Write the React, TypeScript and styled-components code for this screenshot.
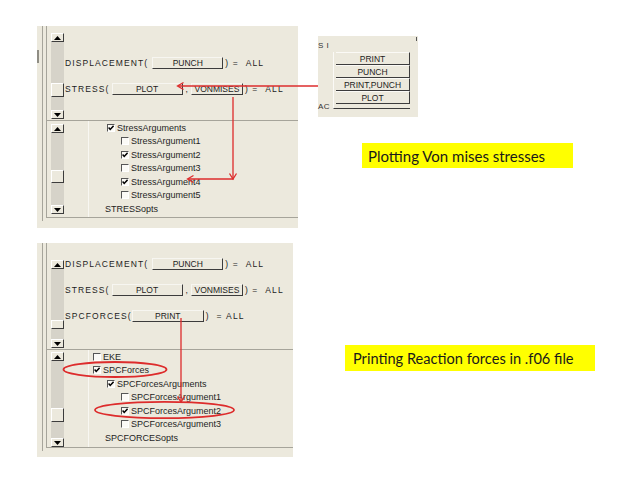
import React from 'react';
import styled, { createGlobalStyle } from 'styled-components';

const BEIGE = '#ece9dd';
const DARK = '#3c3c3c';
const LINE = '#a6a49a';
const RED = '#dd2c2c';

const GlobalStyle = createGlobalStyle`
  html, body { margin: 0; padding: 0; background: #fff; }
  body { font-family: 'Liberation Sans', Arial, sans-serif; color: #1c1c1c; }
  * { box-sizing: border-box; }
`;

type TreeNode = { label: string; indent: number; box?: boolean; checked?: boolean };

const stressTree: TreeNode[] = [
  { label: 'StressArguments', indent: 18, box: true, checked: true },
  { label: 'StressArgument1', indent: 32, box: true },
  { label: 'StressArgument2', indent: 32, box: true, checked: true },
  { label: 'StressArgument3', indent: 32, box: true },
  { label: 'StressArgument4', indent: 32, box: true, checked: true },
  { label: 'StressArgument5', indent: 32, box: true },
  { label: 'STRESSopts', indent: 16 },
];

const spcTree: TreeNode[] = [
  { label: 'EKE', indent: 4, box: true },
  { label: 'SPCForces', indent: 4, box: true, checked: true },
  { label: 'SPCForcesArguments', indent: 18, box: true, checked: true },
  { label: 'SPCForcesArgument1', indent: 32, box: true },
  { label: 'SPCForcesArgument2', indent: 32, box: true, checked: true },
  { label: 'SPCForcesArgument3', indent: 32, box: true },
  { label: 'SPCFORCESopts', indent: 16 },
];

const popupItems = ['PRINT', 'PUNCH', 'PRINT,PUNCH', 'PLOT'];

export default function App() {
  return (
    <Page>
      <GlobalStyle />
      <Stack>
        <Row>
          <Panel $w={261} $h={202} $padBottom={7}>
            <LeftStrip>
              <Mark />
            </LeftStrip>
            <Frame>
              <Inner>
                <Section $h={95} $line>
                  <ScrollBar padTop={7} padBottom={1} thumbAt={41} thumbSize={14} />
                  <FormArea $padTop={24}>
                    <FormRow>
                      <Label>DISPLACEMENT(</Label>
                      <Field $w={71} $gap={4}>PUNCH</Field>
                      <Tail>{')\u00a0=\u00a0\u00a0ALL'}</Tail>
                    </FormRow>
                    <FormRow>
                      <Label>STRESS(</Label>
                      <Field $w={71} $gap={2}>PLOT</Field>
                      <Comma>,</Comma>
                      <Field $w={52} $gap={0}>VONMISES</Field>
                      <Tail>{')\u00a0=\u00a0\u00a0ALL'}</Tail>
                    </FormRow>
                  </FormArea>
                </Section>
                <Section $h={96}>
                  <ScrollBar padTop={3} padBottom={3} thumbAt={37} thumbSize={13} />
                  <Tree nodes={stressTree} />
                </Section>
              </Inner>
            </Frame>
          </Panel>
          <Side>
            <Popup>
              <FragCol>
                <Frag>S I</Frag>
                <Frag>AC</Frag>
              </FragCol>
              <ListFrame>
                {popupItems.map((p) => (
                  <PopupItem key={p}>{p}</PopupItem>
                ))}
              </ListFrame>
              <RightCol>
                <Tick />
              </RightCol>
            </Popup>
            <Caption $w={211} $h={25} $pl={6} $top={26} $left={64}>
              Plotting Von mises stresses
            </Caption>
          </Side>
        </Row>
        <Row>
          <Panel $w={256} $h={214} $padBottom={6}>
            <LeftStrip />
            <Frame>
              <Inner>
                <Section $h={107} $line>
                  <ScrollBar padTop={17} padBottom={1} thumbAt={51} thumbSize={9} />
                  <FormArea $padTop={8}>
                    <FormRow>
                      <Label>DISPLACEMENT(</Label>
                      <Field $w={71} $gap={4}>PUNCH</Field>
                      <Tail>{')\u00a0=\u00a0\u00a0ALL'}</Tail>
                    </FormRow>
                    <FormRow>
                      <Label>STRESS(</Label>
                      <Field $w={71} $gap={2}>PLOT</Field>
                      <Comma>,</Comma>
                      <Field $w={52} $gap={0}>VONMISES</Field>
                      <Tail>{')\u00a0=\u00a0\u00a0ALL'}</Tail>
                    </FormRow>
                    <FormRow>
                      <Label>SPCFORCES(</Label>
                      <Field $w={72} $gap={0}>PRINT</Field>
                      <Tail>{')\u00a0\u00a0=\u00a0ALL'}</Tail>
                    </FormRow>
                  </FormArea>
                </Section>
                <Section $h={97}>
                  <ScrollBar padTop={2} padBottom={0} thumbAt={47} thumbSize={14} />
                  <Tree nodes={spcTree} />
                </Section>
              </Inner>
            </Frame>
          </Panel>
          <Side>
            <Caption $w={250} $h={26} $pl={8} $top={102} $left={52} $size={14.6}>
              Printing Reaction forces in .f06 file
            </Caption>
          </Side>
        </Row>
      </Stack>

      <Overlay viewBox="0 0 638 478" width={638} height={478}>
        <g stroke={RED} strokeWidth={1.3} fill="none">
          <path d="M318 86 H178" />
          <path d="M183.5 82.5 L177.5 86 L183.5 89.5" />
          <path d="M233 97 V179 H188" />
          <path d="M229.5 173.5 L233 179 L236.5 173.5" />
          <path d="M193.5 175.5 L187.5 179 L193.5 182.5" />
          <path d="M181 318 V402" />
          <path d="M177.5 396.5 L181 402 L184.5 396.5" />
        </g>
        <g stroke={RED} strokeWidth={1.8} fill="none">
          <ellipse cx={115} cy={369.5} rx={51.5} ry={7.5} />
          <ellipse cx={164.5} cy={410} rx={69.5} ry={8.2} />
        </g>
      </Overlay>
    </Page>
  );
}

function ScrollBar({
  padTop,
  padBottom,
  thumbAt,
  thumbSize,
}: {
  padTop: number;
  padBottom: number;
  thumbAt: number;
  thumbSize: number;
}) {
  return (
    <ScrollCol $padTop={padTop} $padBottom={padBottom}>
      <ArrowButton>
        <svg width="7" height="4" viewBox="0 0 7 4">
          <path d="M0 4 L3.5 0 L7 4 Z" fill="#000" />
        </svg>
      </ArrowButton>
      <Track>
        <Thumb $at={thumbAt} $size={thumbSize} />
      </Track>
      <ArrowButton>
        <svg width="7" height="4" viewBox="0 0 7 4">
          <path d="M0 0 L3.5 4 L7 0 Z" fill="#000" />
        </svg>
      </ArrowButton>
    </ScrollCol>
  );
}

function Tree({ nodes }: { nodes: TreeNode[] }) {
  return (
    <TreeArea>
      <Gutter />
      <TreeItems>
        {nodes.map((n) => (
          <TreeItem key={n.label} $indent={n.indent}>
            {n.box && (
              <CheckBox>
                {n.checked && (
                  <svg width="6" height="6" viewBox="0 0 6 6">
                    <path d="M0.6 2.6 L2.2 4.4 L5.6 0.8" stroke="#000" strokeWidth="1.5" fill="none" />
                  </svg>
                )}
              </CheckBox>
            )}
            {n.label}
          </TreeItem>
        ))}
      </TreeItems>
    </TreeArea>
  );
}

const Page = styled.div`
  position: relative;
  width: 638px;
  height: 478px;
  overflow: hidden;
  background: #fff;
`;

const Stack = styled.div`
  display: flex;
  flex-direction: column;
  gap: 15px;
  padding: 26px 0 0 37px;
`;

const Row = styled.div`
  display: flex;
  align-items: flex-start;
`;

const Panel = styled.div<{ $w: number; $h: number; $padBottom: number }>`
  display: flex;
  align-items: flex-start;
  width: ${(p) => p.$w}px;
  height: ${(p) => p.$h}px;
  padding-bottom: ${(p) => p.$padBottom}px;
  background: ${BEIGE};
`;

const LeftStrip = styled.div`
  width: 5px;
  align-self: stretch;
  padding-top: 24px;
`;

const Mark = styled.div`
  width: 2px;
  height: 13px;
  background: #8f8d84;
`;

const Frame = styled.div`
  flex: 1;
  border-left: 1px solid ${LINE};
  padding: 0 0 3px 3px;
`;

const Inner = styled.div`
  display: flex;
  flex-direction: column;
  border-left: 1px solid ${LINE};
  border-bottom: 1px solid ${LINE};
`;

const Section = styled.div<{ $h: number; $line?: boolean }>`
  display: flex;
  height: ${(p) => p.$h}px;
  padding-left: 4px;
  border-bottom: ${(p) => (p.$line ? `1px solid ${LINE}` : 'none')};
`;

const ScrollCol = styled.div<{ $padTop: number; $padBottom: number }>`
  display: flex;
  flex-direction: column;
  width: 13px;
  flex-shrink: 0;
  padding: ${(p) => p.$padTop}px 0 ${(p) => p.$padBottom}px;
`;

const ArrowButton = styled.div`
  display: flex;
  align-items: center;
  justify-content: center;
  height: 9px;
  background: ${BEIGE};
  border-top: 1px solid #fff;
  border-left: 1px solid #fff;
  border-right: 1px solid ${DARK};
  border-bottom: 1px solid ${DARK};
`;

const Track = styled.div`
  flex: 1;
  background: #d6d3c9;
`;

const Thumb = styled.div<{ $at: number; $size: number }>`
  margin-top: ${(p) => p.$at}px;
  height: ${(p) => p.$size}px;
  background: ${BEIGE};
  border-top: 1px solid #fff;
  border-left: 1px solid #fff;
  border-right: 1px solid ${DARK};
  border-bottom: 1px solid ${DARK};
`;

const FormArea = styled.div<{ $padTop: number }>`
  display: flex;
  flex-direction: column;
  padding-top: ${(p) => p.$padTop}px;
  padding-left: 1px;
`;

const FormRow = styled.div`
  display: flex;
  align-items: center;
  height: 26px;
  font-size: 8.5px;
  white-space: nowrap;
`;

const Label = styled.span`
  letter-spacing: 1.1px;
`;

const Field = styled.span<{ $w: number; $gap: number }>`
  display: inline-flex;
  align-items: center;
  justify-content: center;
  width: ${(p) => p.$w}px;
  height: 12px;
  margin-left: ${(p) => p.$gap}px;
  border-top: 1px solid #f7f6f1;
  border-left: 1px solid #f7f6f1;
  border-right: 1px solid ${DARK};
  border-bottom: 1px solid ${DARK};
  font-size: 8.5px;
`;

const Comma = styled.span`
  margin: 0 3px 0 3px;
`;

const Tail = styled.span`
  margin-left: 2px;
  letter-spacing: 1.1px;
`;

const TreeArea = styled.div`
  display: flex;
  flex: 1;
`;

const Gutter = styled.div`
  width: 25px;
  border-right: 1px solid #f8f7f2;
`;

const TreeItems = styled.div`
  display: flex;
  flex-direction: column;
`;

const TreeItem = styled.div<{ $indent: number }>`
  display: flex;
  align-items: center;
  height: 13.5px;
  padding-left: ${(p) => p.$indent}px;
  font-size: 9px;
  white-space: nowrap;
  color: #1e1e1e;
`;

const CheckBox = styled.span`
  display: inline-flex;
  align-items: center;
  justify-content: center;
  width: 8px;
  height: 8px;
  margin-right: 2px;
  background: #fbfaf6;
  border-top: 1px solid #555;
  border-left: 1px solid #555;
  border-right: 1px solid #fff;
  border-bottom: 1px solid #fff;
`;

const Side = styled.div`
  display: flex;
  flex-direction: column;
  align-items: flex-start;
`;

const Popup = styled.div`
  display: flex;
  width: 100px;
  height: 81px;
  margin: 10px 0 0 20px;
  background: ${BEIGE};
`;

const FragCol = styled.div`
  display: flex;
  flex-direction: column;
  justify-content: space-between;
  width: 15px;
  padding: 5px 0 6px;
`;

const Frag = styled.span`
  font-size: 8px;
  letter-spacing: 0.5px;
  color: #333;
  white-space: nowrap;
`;

const ListFrame = styled.div`
  display: flex;
  flex-direction: column;
  margin-top: 16px;
  align-self: flex-start;
  width: 77px;
  padding: 0 0 4px 2px;
  border-left: 1px solid #fbfaf6;
  border-bottom: 1px solid ${DARK};
`;

const PopupItem = styled.div`
  display: flex;
  align-items: center;
  justify-content: center;
  height: 13px;
  border-top: 1px solid #fbfaf6;
  border-right: 1px solid ${DARK};
  border-bottom: 1px solid ${DARK};
  font-size: 8.5px;
  color: #1c1c1c;
`;

const RightCol = styled.div`
  flex: 1;
  padding: 1px 0 0 6px;
`;

const Tick = styled.div`
  width: 1px;
  height: 4px;
  background: #555;
`;

const Caption = styled.div<{
  $w: number;
  $h: number;
  $pl: number;
  $top: number;
  $left: number;
  $size?: number;
}>`
  display: flex;
  align-items: center;
  width: ${(p) => p.$w}px;
  height: ${(p) => p.$h}px;
  margin: ${(p) => p.$top}px 0 0 ${(p) => p.$left}px;
  padding-left: ${(p) => p.$pl}px;
  background: #ffff00;
  font-family: Lato, 'Liberation Sans', sans-serif;
  font-size: ${(p) => p.$size ?? 15}px;
  color: #1a1a1a;
  white-space: nowrap;
`;

const Overlay = styled.svg`
  position: absolute;
  left: 0;
  top: 0;
  pointer-events: none;
`;
